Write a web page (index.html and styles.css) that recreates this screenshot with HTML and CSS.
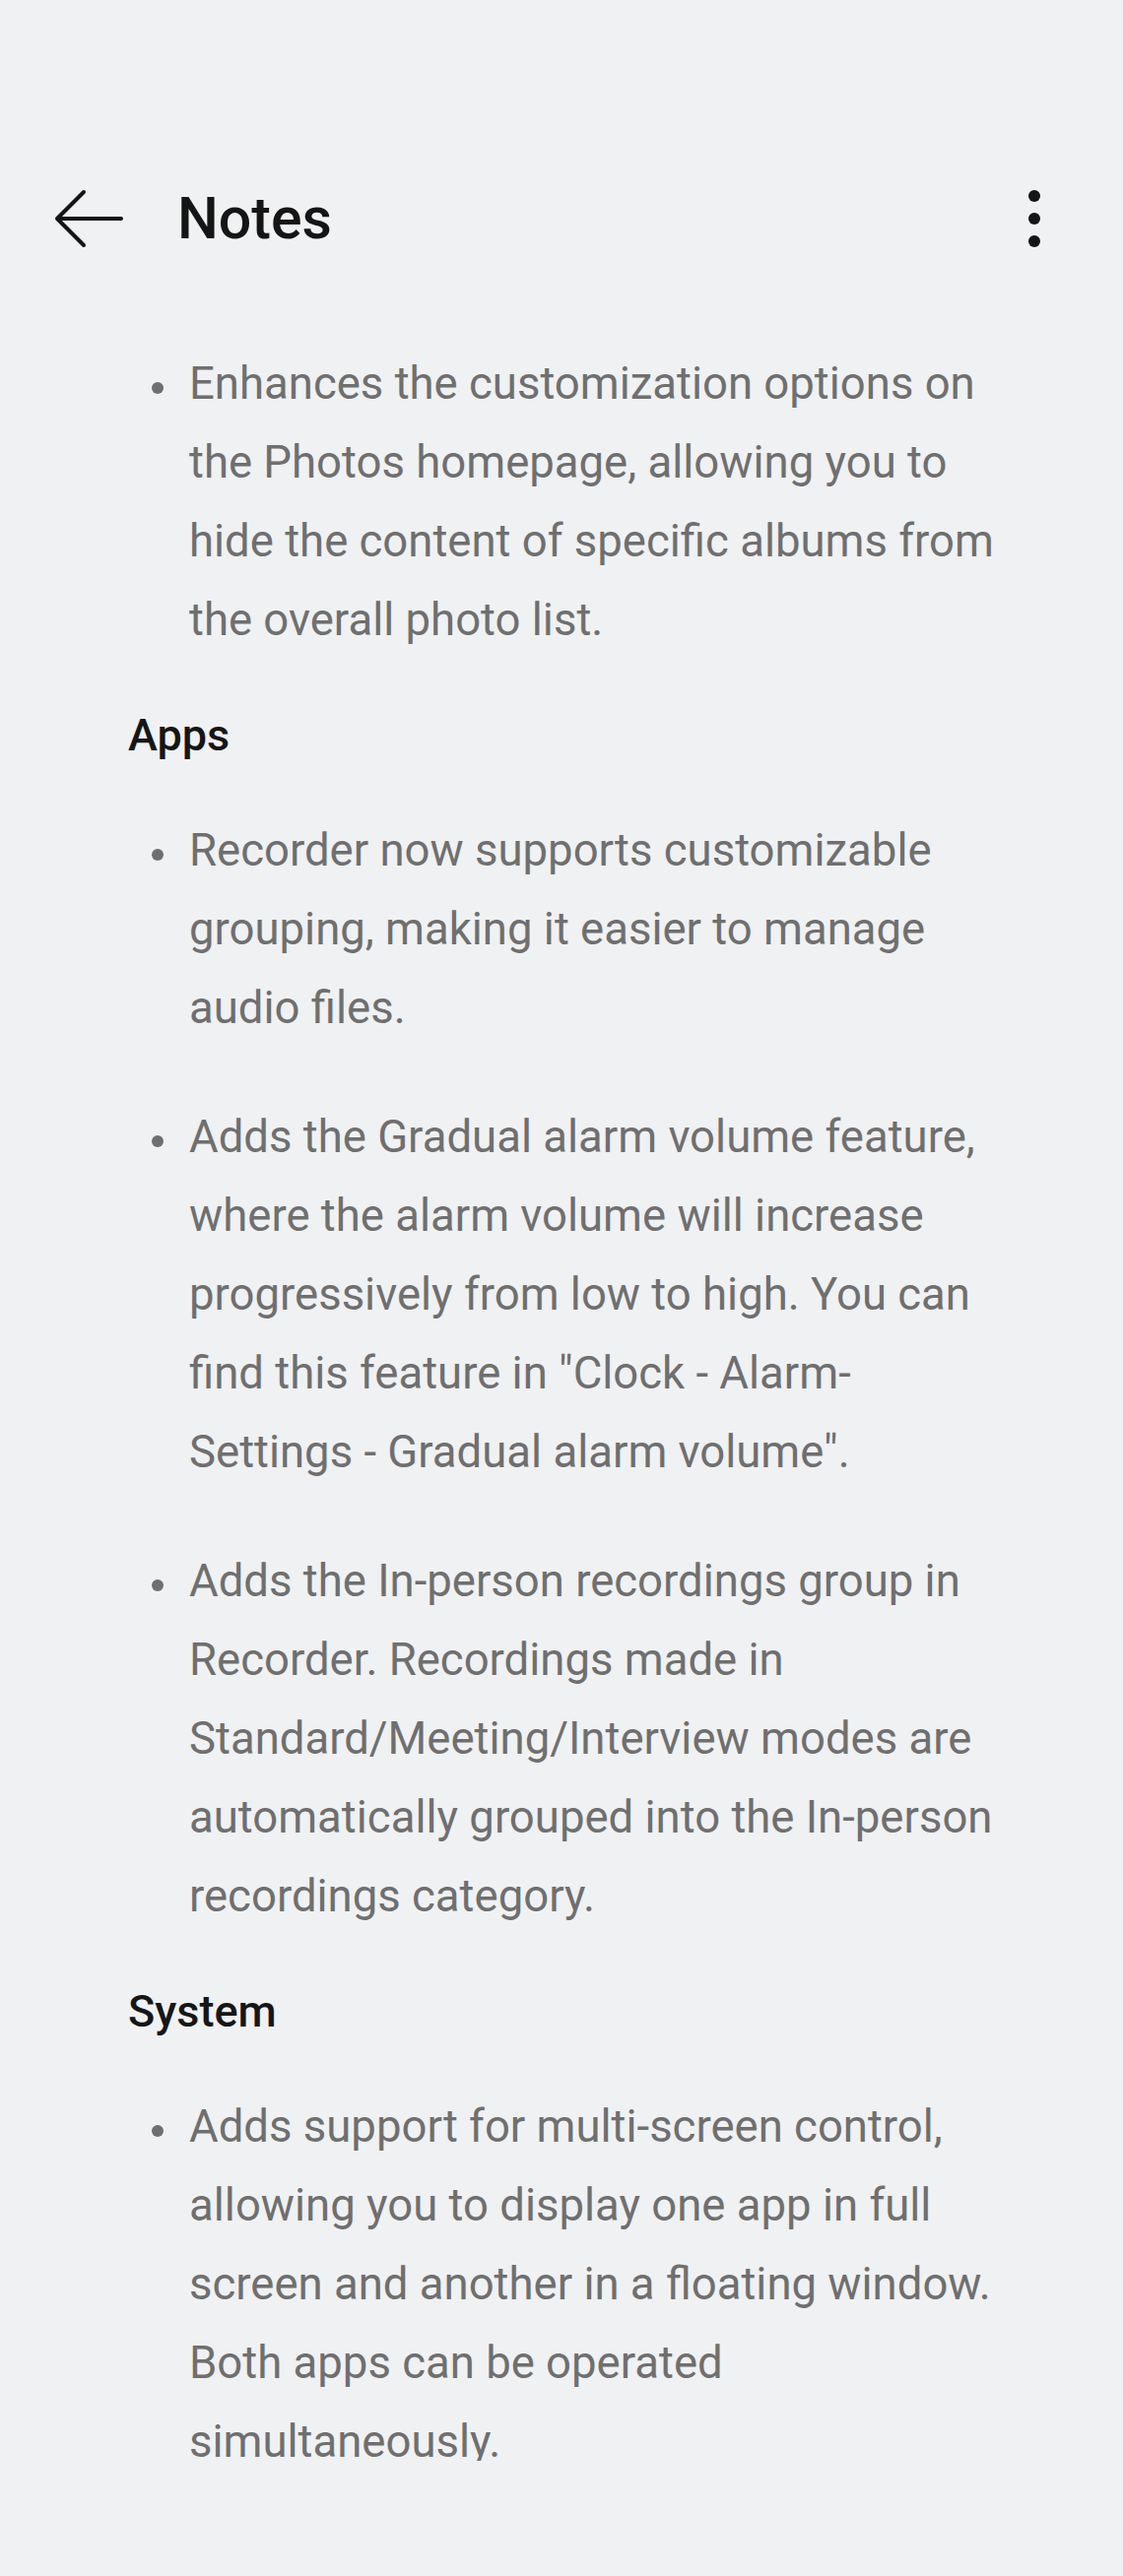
FILE: index.html
```html
<!DOCTYPE html>
<html lang="en">
<head>
    <meta charset="UTF-8">
    <meta name="viewport" content="width=device-width, initial-scale=1.0">
    <title>Notes</title>
    <link rel="stylesheet" href="styles.css">
</head>
<body>

    <!-- Top bar -->
    <div class="appbar">
        <svg class="back-icon" width="72" height="72" viewBox="0 0 72 72">
            <path d="M69 36H4M31 9L4 36l27 27" fill="none" stroke="#151515" stroke-width="4" stroke-linecap="round" stroke-linejoin="round"/>
        </svg>
        <h1 class="title">Notes</h1>
        <svg class="more-icon" width="24" height="72" viewBox="0 0 24 72">
            <circle cx="12" cy="13" r="6" fill="#151515"/>
            <circle cx="12" cy="36" r="6" fill="#151515"/>
            <circle cx="12" cy="59" r="6" fill="#151515"/>
        </svg>
    </div>

    <!-- Release notes -->
    <div class="notes">
        <ul class="items">
            <li>Enhances the customization options on the Photos homepage, allowing you to hide the content of specific albums from the overall photo list.</li>
        </ul>

        <h3 class="section">Apps</h3>
        <ul class="items">
            <li>Recorder now supports customizable grouping, making it easier to manage audio files.</li>
            <li>Adds the Gradual alarm volume feature, where the alarm volume will increase progressively from low to high. You can find this feature in "Clock - Alarm-Settings - Gradual alarm volume".</li>
            <li>Adds the In-person recordings group in Recorder. Recordings made in <span class="nowrap">Standard/Meeting/Interview</span> modes are automatically grouped into the In-person recordings category.</li>
        </ul>

        <h3 class="section">System</h3>
        <ul class="items">
            <li>Adds support for multi-screen control, allowing you to display one app in full screen and another in a floating window. Both apps can be operated simultaneously.</li>
        </ul>
    </div>

</body>
</html>
```

FILE: styles.css
```css
body {
    margin: 0;
    background-color: #f0f1f3;
    font-family: Roboto, "Liberation Sans", sans-serif;
}
.appbar {
    display: flex;
    align-items: center;
    height: 130px;
    margin-top: 157px;
    padding: 0 78px 0 54px;
}
.back-icon {
    flex-shrink: 0;
}
.title {
    flex: 1;
    margin: 0 0 0 54px;
    font-size: 59px;
    font-weight: 500;
    color: #151515;
    line-height: 70px;
}
.more-icon {
    flex-shrink: 0;
}
.notes {
    height: 2212px;
    overflow: hidden;
    box-sizing: border-box;
    padding-top: 63px;
}
.section {
    margin: 47px 0;
    padding-left: 130px;
    font-size: 45px;
    font-weight: 500;
    line-height: 60px;
    color: #161616;
}
.items {
    list-style: none;
    margin: 0;
    padding: 0 120px 0 192px;
}
.items li {
    position: relative;
    font-size: 45.5px;
    line-height: 80px;
    color: #6f6f6f;
}
.items li + li {
    margin-top: 51px;
}
.items li::before {
    content: "";
    position: absolute;
    left: -38px;
    top: 38px;
    width: 12px;
    height: 12px;
    border-radius: 50%;
    background: #6f6f6f;
}
.nowrap {
    white-space: nowrap;
}
```
